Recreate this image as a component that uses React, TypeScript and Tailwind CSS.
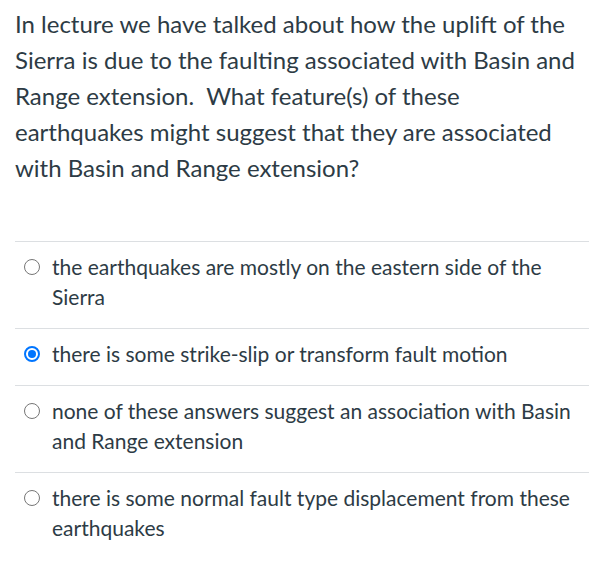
import React, { useState } from 'react';

const answers = [
  'the earthquakes are mostly on the eastern side of the Sierra',
  'there is some strike-slip or transform fault motion',
  'none of these answers suggest an association with Basin and Range extension',
  'there is some normal fault type displacement from these earthquakes',
];

export default function App() {
  const [selected, setSelected] = useState(1);

  return (
    <div className="w-[609px] bg-white pt-[6px] text-[#2d3b45]" style={{ fontFamily: 'Lato, "Noto Sans", sans-serif' }}>
      {/* Question */}
      <div className="pl-[15px] pr-[24px] text-[24px] leading-[36px]">
        In lecture we have talked about how the uplift of the Sierra is due to the faulting associated with Basin and
        Range extension.&nbsp; What feature(s) of these earthquakes might suggest that they are associated with Basin and
        Range extension?
      </div>

      {/* Answers */}
      <div className="ml-[15px] mr-[20px] mt-[55px]">
        {answers.map((text, i) => {
          const on = selected === i;
          return (
            <label
              key={i}
              onClick={() => setSelected(i)}
              className={`flex items-start pl-[9px] pt-[10px] pb-[16px] border-t border-[#dcdfe2] cursor-pointer ${
                i === answers.length - 1 ? 'pb-[40px]' : ''
              }`}
            >
              <span
                className={`mt-[7px] w-[16px] h-[16px] shrink-0 rounded-full flex items-center justify-center ${
                  on ? 'border-2 border-[#0075ff]' : 'border-[1.5px] border-[#767676]'
                }`}
              >
                {on && <span className="w-[8px] h-[8px] rounded-full bg-[#0075ff]" />}
              </span>
              <span className="ml-[12px] text-[21px] leading-[30px]">{text}</span>
            </label>
          );
        })}
      </div>
    </div>
  );
}
